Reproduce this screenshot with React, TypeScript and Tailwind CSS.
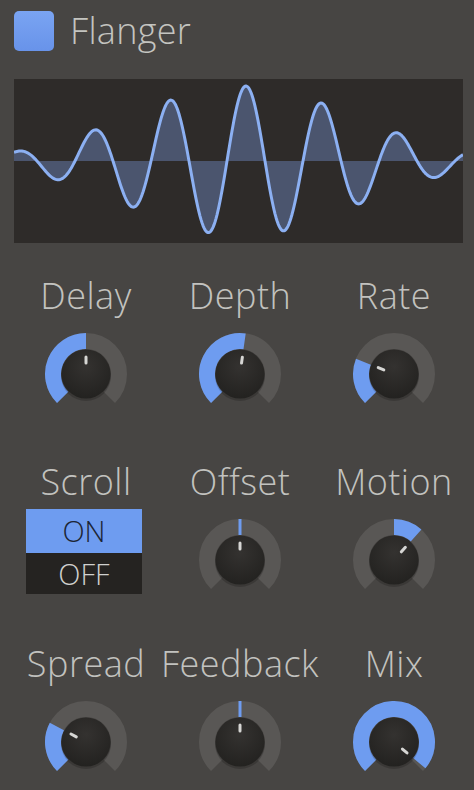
import React from 'react';

const BLUE = '#6e9cf0';
const RING = '#595755';

// angle in degrees, 0 = straight up, clockwise positive
const polar = (r: number, deg: number) => {
  const a = ((deg - 90) * Math.PI) / 180;
  return [42 + r * Math.cos(a), 42 + r * Math.sin(a)];
};

const arc = (r: number, from: number, to: number) => {
  const [x1, y1] = polar(r, from);
  const [x2, y2] = polar(r, to);
  const large = to - from > 180 ? 1 : 0;
  return `M ${x1} ${y1} A ${r} ${r} 0 ${large} 1 ${x2} ${y2}`;
};

function Knob({ value, bipolar = false }: { value: number; bipolar?: boolean }) {
  const from = bipolar ? Math.min(0, value) : -135;
  const to = bipolar ? Math.max(0, value) : value;
  const [ix1, iy1] = polar(11, value);
  const [ix2, iy2] = polar(17, value);
  return (
    <svg width="84" height="84" viewBox="0 0 84 84">
      <defs>
        <radialGradient id="kb" cx="50%" cy="35%" r="65%">
          <stop offset="0%" stopColor="#343230" />
          <stop offset="100%" stopColor="#232220" />
        </radialGradient>
      </defs>
      <path d={arc(33, -135, 135)} stroke={RING} strokeWidth="16" fill="none" />
      {to - from > 0.5 ? (
        <path d={arc(33, from, to)} stroke={BLUE} strokeWidth="16" fill="none" />
      ) : (
        <line x1="42" y1="1" x2="42" y2="17" stroke={BLUE} strokeWidth="3" />
      )}
      <circle cx="42" cy="44" r="25" fill="#000" opacity="0.18" />
      <circle cx="42" cy="42" r="24.5" fill="url(#kb)" />
      <line x1={ix1} y1={iy1} x2={ix2} y2={iy2} stroke="#d6d6d4" strokeWidth="3" strokeLinecap="round" />
    </svg>
  );
}

function Wave() {
  const W = 449;
  const H = 164;
  const mid = 82;
  const pts: string[] = [];
  for (let x = 0; x <= W; x += 1) {
    const amp = 75 * Math.exp(-Math.pow((x - 228) / 157, 2));
    const y = mid - amp * Math.cos((2 * Math.PI * (x - 232)) / 76);
    pts.push(`${x} ${y.toFixed(2)}`);
  }
  const line = 'M ' + pts.join(' L ');
  const fill = `${line} L ${W} ${mid} L 0 ${mid} Z`;
  return (
    <svg width={W} height={H} viewBox={`0 0 ${W} ${H}`} className="block">
      <path d={fill} fill="#4b556e" />
      <path d={line} stroke="#8cb0f2" strokeWidth="3" fill="none" strokeLinejoin="round" />
    </svg>
  );
}

function Label({ text }: { text: string }) {
  return (
    <div className="h-[40px] text-[36px] leading-[40px] tracking-[0.5px] font-[350] text-[#c2c2bf] whitespace-nowrap">
      {text}
    </div>
  );
}

function Cell({ label, value, bipolar }: { label: string; value: number; bipolar?: boolean }) {
  return (
    <div className="flex flex-col items-center">
      <Label text={label} />
      <div className="mt-[16px]">
        <Knob value={value} bipolar={bipolar} />
      </div>
    </div>
  );
}

export default function App() {
  return (
    <div
      className="w-[474px] h-[790px] bg-[#474543] overflow-hidden"
      style={{ fontFamily: '"Open Sans", "Noto Sans", sans-serif' }}
    >
      {/* Header */}
      <div className="flex items-center pt-[11px] pl-[14px]">
        <div className="w-[40px] h-[40px] rounded-[5px] bg-gradient-to-b from-[#7aa4f2] to-[#6893ea]" />
        <div className="ml-[16px] text-[36px] leading-[40px] tracking-[0.3px] font-[350] text-[#c4c4c0]">Flanger</div>
      </div>

      {/* Waveform */}
      <div className="mt-[28px] ml-[14px] w-[449px] h-[164px] bg-[#2e2b29]">
        <Wave />
      </div>

      {/* Row 1 */}
      <div className="grid grid-cols-[154px_154px_154px] px-[9px] mt-[33px]">
        <Cell label="Delay" value={0} />
        <Cell label="Depth" value={8} />
        <Cell label="Rate" value={-68} />
      </div>

      {/* Row 2 */}
      <div className="grid grid-cols-[154px_154px_154px] px-[9px] mt-[46px]">
        <div className="flex flex-col items-center">
          <Label text="Scroll" />
          <div className="mt-[7px] mr-[4px] w-[116px] flex flex-col">
            <div className="h-[44px] bg-[#6e9cf0] flex items-center justify-center text-[29px] font-[350] text-[#1c2535]">ON</div>
            <div className="h-[41px] bg-[#252321] flex items-center justify-center text-[29px] font-[350] text-[#d0d0ce]">OFF</div>
          </div>
        </div>
        <Cell label="Offset" value={0} bipolar />
        <Cell label="Motion" value={42} bipolar />
      </div>

      {/* Row 3 */}
      <div className="grid grid-cols-[154px_154px_154px] px-[9px] mt-[42px]">
        <Cell label="Spread" value={-62} />
        <Cell label="Feedback" value={0} bipolar />
        <Cell label="Mix" value={130} />
      </div>
    </div>
  );
}
